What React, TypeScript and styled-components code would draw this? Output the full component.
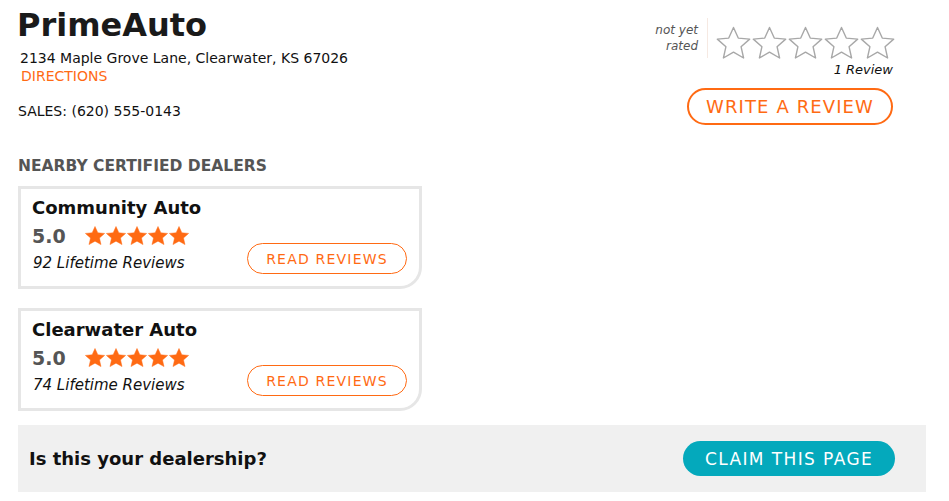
import React from 'react';
import styled, { createGlobalStyle } from 'styled-components';

const GlobalStyle = createGlobalStyle`
  html, body {
    margin: 0;
    padding: 0;
    background: #fff;
  }
  body {
    font-family: 'DejaVu Sans', Verdana, sans-serif;
    color: #111;
  }
`;

const ORANGE = '#ff6a13';

interface Dealer {
  name: string;
  rating: string;
  reviews: number;
}

const dealers: Dealer[] = [
  { name: 'Community Auto', rating: '5.0', reviews: 92 },
  { name: 'Clearwater Auto', rating: '5.0', reviews: 74 },
];

const STAR =
  'M12 1.6l3.09 6.88 7.41.68-5.6 4.93 1.65 7.31L12 17.6l-6.55 3.8 1.65-7.31-5.6-4.93 7.41-.68z';

const Star: React.FC<{ size: number; filled?: boolean }> = ({ size, filled }) => (
  <svg width={size} height={size} viewBox="0 0 24 24">
    <path
      d={STAR}
      fill={filled ? ORANGE : '#fff'}
      stroke={filled ? ORANGE : '#a8a8a8'}
      strokeWidth={filled ? 0.5 : 0.9}
      strokeLinejoin="round"
    />
  </svg>
);

const App: React.FC = () => {
  return (
    <>
      <GlobalStyle />
      <Page>
        <Top>
          <Info>
            <Title>PrimeAuto</Title>
            <Address>2134 Maple Grove Lane, Clearwater, KS 67026</Address>
            <Directions href="#">DIRECTIONS</Directions>
            <Phone>SALES: (620) 555-0143</Phone>
          </Info>

          <Rating>
            <RatingRow>
              <NotRated>
                not yet
                <br />
                rated
              </NotRated>
              <Divider />
              <Stars>
                {[0, 1, 2, 3, 4].map(i => (
                  <Star key={i} size={37} />
                ))}
              </Stars>
            </RatingRow>
            <ReviewCount>1 Review</ReviewCount>
            <WriteButton>WRITE A REVIEW</WriteButton>
          </Rating>
        </Top>

        <SectionTitle>NEARBY CERTIFIED DEALERS</SectionTitle>

        <CardList>
          {dealers.map(d => (
            <Card key={d.name}>
              <DealerName>{d.name}</DealerName>
              <CardBody>
                <div>
                  <Score>
                    <ScoreValue>{d.rating}</ScoreValue>
                    <SmallStars>
                      {[0, 1, 2, 3, 4].map(i => (
                        <Star key={i} size={22} filled />
                      ))}
                    </SmallStars>
                  </Score>
                  <Lifetime>{d.reviews} Lifetime Reviews</Lifetime>
                </div>
                <ReadButton>READ REVIEWS</ReadButton>
              </CardBody>
            </Card>
          ))}
        </CardList>

        <ClaimBar>
          <ClaimText>Is this your dealership?</ClaimText>
          <ClaimButton>CLAIM THIS PAGE</ClaimButton>
        </ClaimBar>
      </Page>
    </>
  );
};

const Page = styled.div`
  width: 949px;
  padding: 6px 23px 0 18px;
  box-sizing: border-box;
`;

const Top = styled.div`
  display: flex;
  justify-content: space-between;
  align-items: flex-start;
  padding-right: 33px;
`;

const Info = styled.div`
  display: flex;
  flex-direction: column;
`;

const Title = styled.h1`
  margin: 0 0 0 -1px;
  font-size: 32px;
  line-height: 38px;
  font-weight: bold;
  color: #1a1a1a;
`;

const Address = styled.div`
  margin: 5px 0 0 2px;
  font-size: 14px;
  line-height: 18px;
  color: #111;
`;

const Directions = styled.a`
  margin-left: 3px;
  font-size: 14px;
  line-height: 18px;
  color: ${ORANGE};
  text-decoration: none;
`;

const Phone = styled.div`
  margin-top: 17px;
  font-size: 14px;
  line-height: 18px;
  color: #111;
`;

const Rating = styled.div`
  display: flex;
  flex-direction: column;
  align-items: flex-end;
  padding-top: 16px;
`;

const RatingRow = styled.div`
  display: flex;
  align-items: center;
`;

const NotRated = styled.div`
  margin-bottom: 10px;
  font-size: 12px;
  line-height: 16px;
  font-style: italic;
  color: #555;
  text-align: right;
`;

const Divider = styled.div`
  align-self: flex-start;
  width: 1px;
  height: 40px;
  margin: -4px 8px 0 9px;
  background: #f6e9e2;
`;

const Stars = styled.div`
  display: flex;
  margin-right: -3px;

  svg {
    margin-left: -1px;
  }
`;

const ReviewCount = styled.div`
  margin-top: -2px;
  font-size: 13px;
  line-height: 16px;
  font-style: italic;
  color: #111;
`;

const WriteButton = styled.button`
  margin-top: 10px;
  width: 206px;
  height: 37px;
  border: 2px solid ${ORANGE};
  border-radius: 19px;
  background: #fff;
  color: ${ORANGE};
  font-family: inherit;
  font-size: 18px;
  letter-spacing: 1.1px;
  cursor: pointer;
`;

const SectionTitle = styled.h2`
  margin: 32px 0 11px;
  font-size: 15.5px;
  line-height: 18px;
  font-weight: bold;
  color: #555;
`;

const CardList = styled.div`
  display: flex;
  flex-direction: column;
  gap: 19px;
`;

const Card = styled.div`
  width: 404px;
  height: 103px;
  box-sizing: border-box;
  border: 3px solid #e6e6e6;
  border-bottom-right-radius: 22px;
  padding: 8px 12px 0 11px;
  background: #fff;
`;

const DealerName = styled.div`
  font-size: 18px;
  line-height: 22px;
  font-weight: bold;
  color: #111;
`;

const CardBody = styled.div`
  display: flex;
  justify-content: space-between;
  align-items: flex-end;
`;

const Score = styled.div`
  display: flex;
  align-items: center;
  margin-top: 6px;
`;

const ScoreValue = styled.span`
  width: 52px;
  font-size: 19px;
  line-height: 22px;
  font-weight: bold;
  color: #555;
`;

const SmallStars = styled.div`
  display: flex;

  svg {
    margin-right: -1px;
  }
`;

const Lifetime = styled.div`
  margin-top: 7px;
  margin-left: 1px;
  font-size: 15px;
  line-height: 19px;
  font-style: italic;
  color: #111;
`;

const ReadButton = styled.button`
  width: 160px;
  height: 31px;
  margin-bottom: -1px;
  border: 1.5px solid ${ORANGE};
  border-radius: 16px;
  background: #fff;
  color: ${ORANGE};
  font-family: inherit;
  font-size: 14px;
  letter-spacing: 1.2px;
  cursor: pointer;
`;

const ClaimBar = styled.div`
  display: flex;
  justify-content: space-between;
  align-items: center;
  margin-top: 14px;
  height: 67px;
  padding: 0 31px 0 11px;
  background: #f0f0f0;
`;

const ClaimText = styled.div`
  font-size: 18px;
  font-weight: bold;
  color: #111;
`;

const ClaimButton = styled.button`
  width: 212px;
  height: 35px;
  border: none;
  border-radius: 18px;
  background: #04a9bc;
  color: #fff;
  font-family: inherit;
  font-size: 17px;
  letter-spacing: 1.4px;
  cursor: pointer;
`;

export default App;
